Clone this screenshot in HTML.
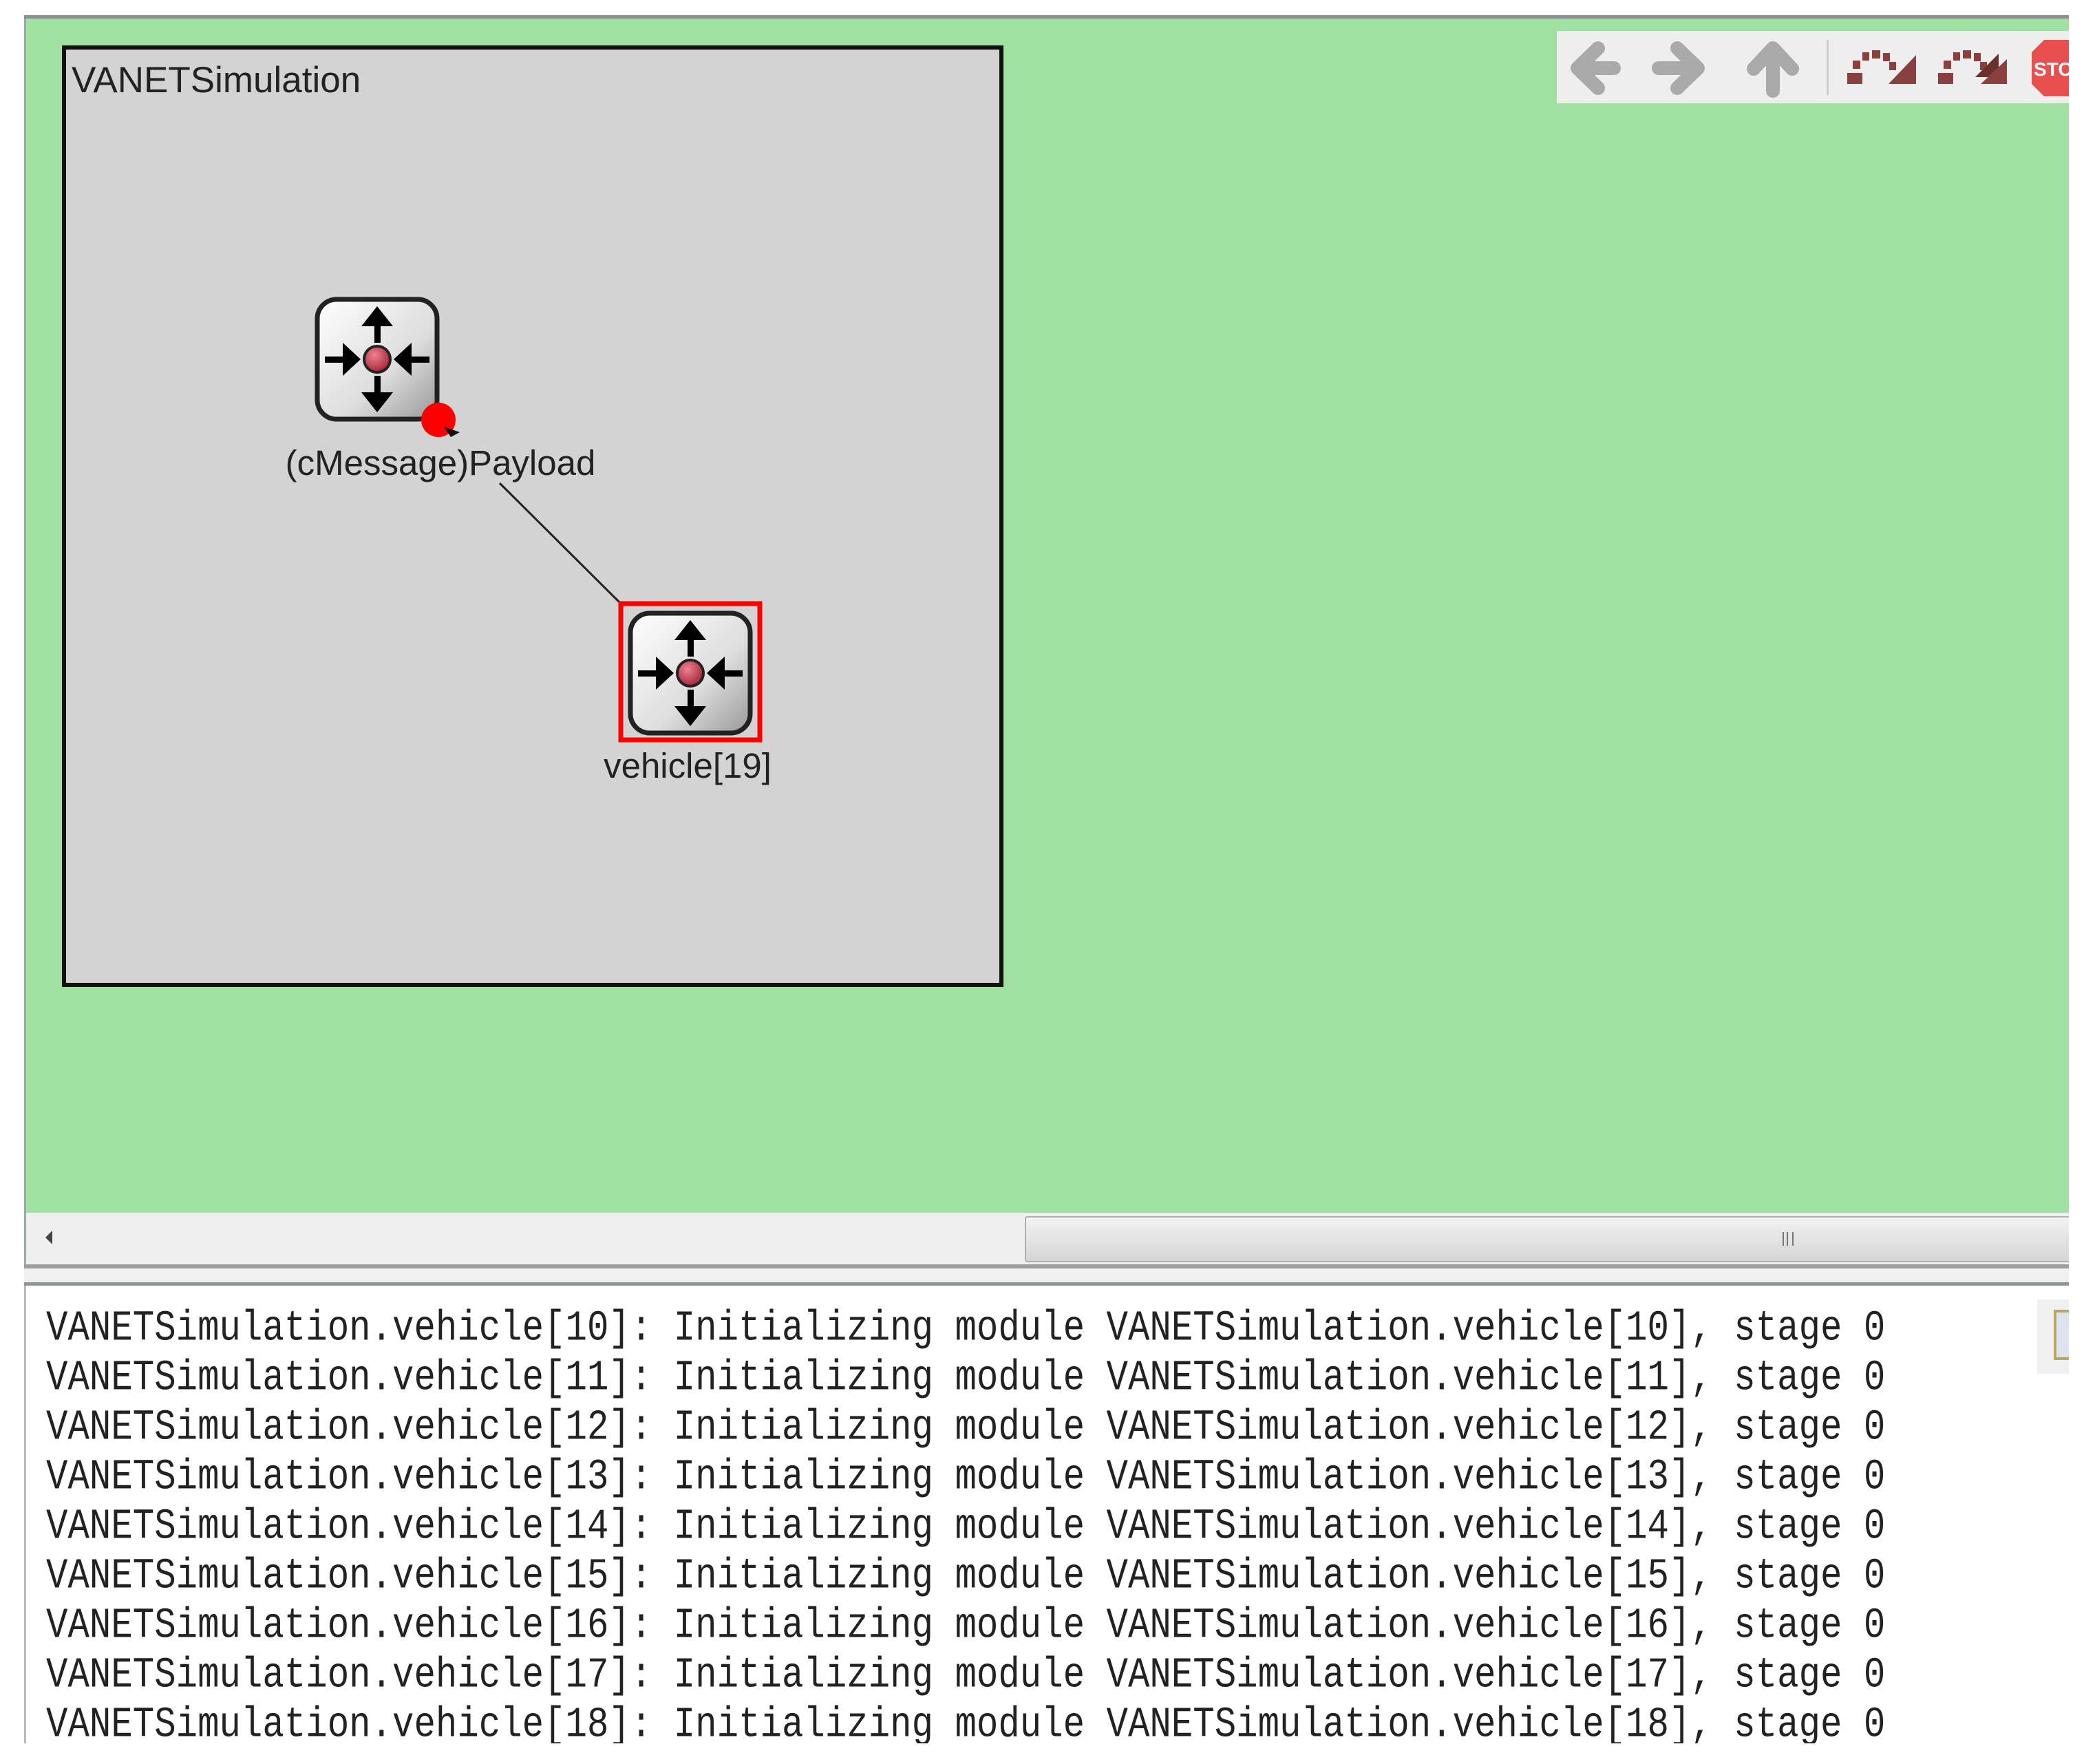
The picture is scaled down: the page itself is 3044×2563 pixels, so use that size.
<!DOCTYPE html>
<html><head><meta charset="utf-8"><style>
html,body{margin:0;padding:0;background:#fff;width:3044px;height:2563px;overflow:hidden;position:relative;font-family:"Liberation Sans",sans-serif}
.abs{position:absolute}
.log{position:absolute;left:29px;font-family:"Liberation Mono",monospace;font-size:52.4px;color:#222;white-space:pre;transform:scaleY(1.18);transform-origin:0 50%;line-height:60px}
</style></head><body>
<div class="abs" style="left:35px;top:22px;width:2971px;height:5px;background:#8a9090"></div>
<div class="abs" style="left:35px;top:27px;width:2971px;height:1735px;background:#a0e0a0;border-left:3px solid #9aa;box-sizing:border-box"></div>
<div class="abs" style="left:2262px;top:45px;width:744px;height:105px;background:#eeeeee"></div>
<svg class="abs" style="left:2262px;top:45px" width="744" height="105" viewBox="2262 45 744 105">
 <g stroke="#aaa" stroke-width="20" stroke-linecap="round" stroke-linejoin="round" fill="none">
  <path d="M2345 99H2292M2322 70L2292 99L2322 128"/>
  <path d="M2410 99H2465M2437 70L2467 99L2437 128"/>
  <path d="M2576 132V72M2548 100L2576 70L2604 100"/>
 </g>
 <rect x="2654" y="58" width="3" height="80" fill="#ccc"/>
 <g fill="#8b4040">
  <rect x="2684" y="106" width="22" height="16"/><rect x="2692" y="88" width="11" height="12"/><rect x="2706" y="76" width="10" height="12"/><rect x="2720" y="73" width="12" height="12"/><rect x="2736" y="77" width="10" height="12"/><rect x="2745" y="90" width="10" height="12"/>
  <path d="M2784 80V122H2744Z"/>
  <rect x="2816" y="106" width="22" height="16"/><rect x="2824" y="88" width="11" height="12"/><rect x="2838" y="76" width="10" height="12"/><rect x="2852" y="73" width="12" height="12"/><rect x="2868" y="77" width="10" height="12"/><rect x="2877" y="90" width="10" height="12"/>
  <path d="M2904 78V112H2870Z" fill="#6a3030"/><path d="M2916 86V122H2878Z"/>
 </g>
 <path d="M2970 58H3010V140H2970L2952 122V76Z" fill="#e85050"/>
 <text x="2955" y="110" font-family="Liberation Sans" font-weight="bold" font-size="28" fill="#fff">STO</text>
</svg>
<div class="abs" style="left:90px;top:66px;width:1368px;height:1368px;background:#d3d3d3;border:6px solid #111;box-sizing:border-box"></div>
<div class="abs" style="left:104px;top:86px;font-size:53px;color:#222">VANETSimulation</div>
<svg class="abs" style="left:0;top:0" width="1500" height="1500">
 <defs>
  <linearGradient id="g" x1="0" y1="0" x2="1" y2="1"><stop offset="0" stop-color="#fff"/><stop offset="0.6" stop-color="#ddd"/><stop offset="1" stop-color="#999"/></linearGradient>
  <radialGradient id="b" cx="0.4" cy="0.35" r="0.7"><stop offset="0" stop-color="#f08090"/><stop offset="1" stop-color="#a02030"/></radialGradient>
  <g id="icon">
   <rect x="3" y="3" width="174" height="174" rx="28" fill="url(#g)" stroke="#222" stroke-width="7"/>
   <g fill="#000">
    <rect x="86" y="36" width="9" height="30"/><path d="M67 42L90 13L113 42Z"/>
    <rect x="86" y="114" width="9" height="30"/><path d="M67 138L90 167L113 138Z"/>
    <rect x="14" y="86" width="32" height="9"/><path d="M40 66L66 90L40 114Z"/>
    <rect x="134" y="86" width="32" height="9"/><path d="M140 66L114 90L140 114Z"/>
   </g>
   <circle cx="90" cy="90" r="19" fill="url(#b)" stroke="#222" stroke-width="4"/>
  </g>
 </defs>
 <line x1="726" y1="702" x2="903" y2="878" stroke="#222" stroke-width="3"/>
 <use href="#icon" x="458" y="432"/>
 <circle cx="637" cy="610" r="25" fill="#ff0000"/>
 <path d="M645 620L668 628L655 635Z" fill="#111"/>
 <rect x="902" y="877" width="202" height="198" fill="none" stroke="#ff0000" stroke-width="7"/>
 <use href="#icon" x="913" y="888"/>
 <text x="640" y="690" text-anchor="middle" font-family="Liberation Sans" font-size="51" fill="#222">(cMessage)Payload</text>
 <text x="999" y="1130" text-anchor="middle" font-family="Liberation Sans" font-size="51" fill="#222">vehicle[19]</text>
</svg>
<div class="abs" style="left:35px;top:1762px;width:2971px;height:75px;background:#efefef;border-left:3px solid #9aa;box-sizing:border-box"></div>
<div class="abs" style="left:66px;top:1788px;width:0;height:0;border-top:10px solid transparent;border-bottom:10px solid transparent;border-right:10px solid #444"></div>
<div class="abs" style="left:1489px;top:1767px;width:1517px;height:67px;background:linear-gradient(#f2f2f2,#d6d6d6);border:2px solid #b0b0b0;border-right:none;border-radius:4px 0 0 4px;box-sizing:border-box"></div>
<div class="abs" style="left:2590px;top:1790px;width:12px;height:20px;border-left:2px solid #777;border-right:2px solid #777"><div style="margin-left:4px;width:2px;height:20px;background:#777"></div></div>
<div class="abs" style="left:35px;top:1837px;width:2971px;height:6px;background:#9aa0a0"></div>
<div class="abs" style="left:35px;top:1843px;width:2971px;height:20px;background:#f0f0f0"></div>
<div class="abs" style="left:35px;top:1863px;width:2971px;height:5px;background:#8e9696"></div>
<div class="abs" style="left:35px;top:1868px;width:2971px;height:665px;background:#fff;border-left:3px solid #bbb;box-sizing:border-box;overflow:hidden">
 <div class="abs" style="left:2922px;top:20px;width:49px;height:108px;background:#f0f0f0"></div>
 <div class="abs" style="left:2946px;top:35px;width:25px;height:65px;background:#dde4f0;border:4px solid #b8a860;border-right:none"></div>
 <div class="log" style="top:32px">VANETSimulation.vehicle[10]: Initializing module VANETSimulation.vehicle[10], stage 0</div>
 <div class="log" style="top:104px">VANETSimulation.vehicle[11]: Initializing module VANETSimulation.vehicle[11], stage 0</div>
 <div class="log" style="top:176px">VANETSimulation.vehicle[12]: Initializing module VANETSimulation.vehicle[12], stage 0</div>
 <div class="log" style="top:248px">VANETSimulation.vehicle[13]: Initializing module VANETSimulation.vehicle[13], stage 0</div>
 <div class="log" style="top:320px">VANETSimulation.vehicle[14]: Initializing module VANETSimulation.vehicle[14], stage 0</div>
 <div class="log" style="top:392px">VANETSimulation.vehicle[15]: Initializing module VANETSimulation.vehicle[15], stage 0</div>
 <div class="log" style="top:464px">VANETSimulation.vehicle[16]: Initializing module VANETSimulation.vehicle[16], stage 0</div>
 <div class="log" style="top:536px">VANETSimulation.vehicle[17]: Initializing module VANETSimulation.vehicle[17], stage 0</div>
 <div class="log" style="top:608px">VANETSimulation.vehicle[18]: Initializing module VANETSimulation.vehicle[18], stage 0</div>
</div>
</body></html>
